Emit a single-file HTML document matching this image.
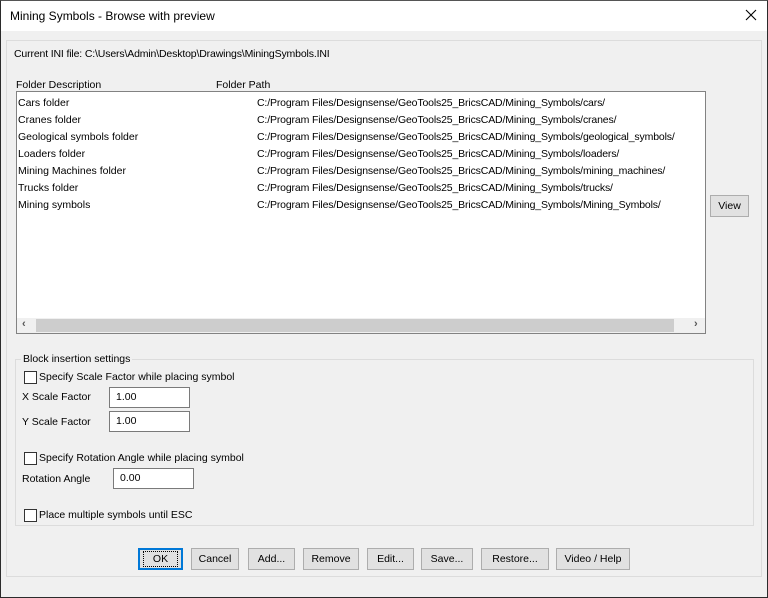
<!DOCTYPE html>
<html><head><style>
*{box-sizing:border-box;margin:0;padding:0}
body{width:768px;height:598px;background:#f0f0f0;font-family:"Liberation Sans",sans-serif;font-size:10.5px;color:#000;position:relative;overflow:hidden}
.a{position:absolute;white-space:nowrap}
.win{position:absolute;left:0;top:0;width:768px;height:598px;border:1px solid #2b2b2b;border-top-color:#555}
.title{position:absolute;left:1px;top:1px;width:766px;height:30px;background:#fff}
.panel{position:absolute;left:6px;top:40px;width:756px;height:537px;border:1px solid #dcdcdc}
.list{position:absolute;left:16px;top:91px;width:690px;height:243px;background:#fff;border:1px solid #828282}
.btn{position:absolute;height:22px;background:#e1e1e1;border:1px solid #adadad;text-align:center;line-height:20px;font-size:10.5px}
.cb{position:absolute;width:13px;height:13px;border:1px solid #333;background:#fff}
.inp{position:absolute;height:21px;background:#fff;border:1px solid #7a7a7a;padding:3px 0 0 6px;font-size:10.5px}
.group{position:absolute;left:15px;top:359px;width:739px;height:167px;border:1px solid #dcdcdc}
.p{letter-spacing:-0.15px}
</style></head><body>
<div class="win"></div>
<div class="title"></div>
<div class="a" style="left:10px;top:9px;font-size:12px">Mining Symbols - Browse with preview</div>
<svg class="a" style="left:745px;top:9px" width="12" height="12"><path d="M1 1L11 11M11 1L1 11" stroke="#000" stroke-width="1.1"/></svg>
<div class="panel"></div>
<div class="a p" style="left:14px;top:48px">Current INI file: C:\Users\Admin\Desktop\Drawings\MiningSymbols.INI</div>
<div class="a" style="left:16px;top:79px">Folder Description</div>
<div class="a" style="left:216px;top:79px">Folder Path</div>
<div class="list">
<div class="a" style="left:1px;top:3px;line-height:17px">Cars folder<br>Cranes folder<br>Geological symbols folder<br>Loaders folder<br>Mining Machines folder<br>Trucks folder<br>Mining symbols</div>
<div class="a p" style="left:240px;top:3px;line-height:17px">C:/Program Files/Designsense/GeoTools25_BricsCAD/Mining_Symbols/cars/<br>C:/Program Files/Designsense/GeoTools25_BricsCAD/Mining_Symbols/cranes/<br>C:/Program Files/Designsense/GeoTools25_BricsCAD/Mining_Symbols/geological_symbols/<br>C:/Program Files/Designsense/GeoTools25_BricsCAD/Mining_Symbols/loaders/<br>C:/Program Files/Designsense/GeoTools25_BricsCAD/Mining_Symbols/mining_machines/<br>C:/Program Files/Designsense/GeoTools25_BricsCAD/Mining_Symbols/trucks/<br>C:/Program Files/Designsense/GeoTools25_BricsCAD/Mining_Symbols/Mining_Symbols/</div>
<div style="position:absolute;left:0;top:226px;width:688px;height:15px;background:#f0f0f0"></div>
<div style="position:absolute;left:19px;top:227px;width:638px;height:13px;background:#cdcdcd"></div>
<div class="a" style="left:5px;top:226px;font-size:11px;color:#555;font-weight:bold">‹</div>
<div class="a" style="left:677px;top:226px;font-size:11px;color:#555;font-weight:bold">›</div>
</div>
<div class="btn" style="left:710px;top:195px;width:39px">View</div>
<div class="group"></div>
<div class="a" style="left:21px;top:353px;background:#f0f0f0;padding:0 2px">Block insertion settings</div>
<div class="cb" style="left:24px;top:371px"></div>
<div class="a" style="left:39px;top:371px">Specify Scale Factor while placing symbol</div>
<div class="a" style="left:22px;top:391px">X Scale Factor</div>
<div class="inp" style="left:109px;top:387px;width:81px">1.00</div>
<div class="a" style="left:22px;top:416px">Y Scale Factor</div>
<div class="inp" style="left:109px;top:411px;width:81px">1.00</div>
<div class="cb" style="left:24px;top:452px"></div>
<div class="a" style="left:39px;top:452px">Specify Rotation Angle while placing symbol</div>
<div class="a" style="left:22px;top:473px">Rotation Angle</div>
<div class="inp" style="left:113px;top:468px;width:81px">0.00</div>
<div class="cb" style="left:24px;top:509px"></div>
<div class="a" style="left:39px;top:509px">Place multiple symbols until ESC</div>
<div class="btn" style="left:138px;top:548px;width:45px;border:2px solid #0078d7;line-height:18px"><span style="outline:1px dotted #000;padding:1px 9px">OK</span></div>
<div class="btn" style="left:191px;top:548px;width:48px">Cancel</div>
<div class="btn" style="left:248px;top:548px;width:47px">Add...</div>
<div class="btn" style="left:303px;top:548px;width:56px">Remove</div>
<div class="btn" style="left:367px;top:548px;width:47px">Edit...</div>
<div class="btn" style="left:421px;top:548px;width:52px">Save...</div>
<div class="btn" style="left:481px;top:548px;width:68px">Restore...</div>
<div class="btn" style="left:556px;top:548px;width:74px">Video / Help</div>
</body></html>
